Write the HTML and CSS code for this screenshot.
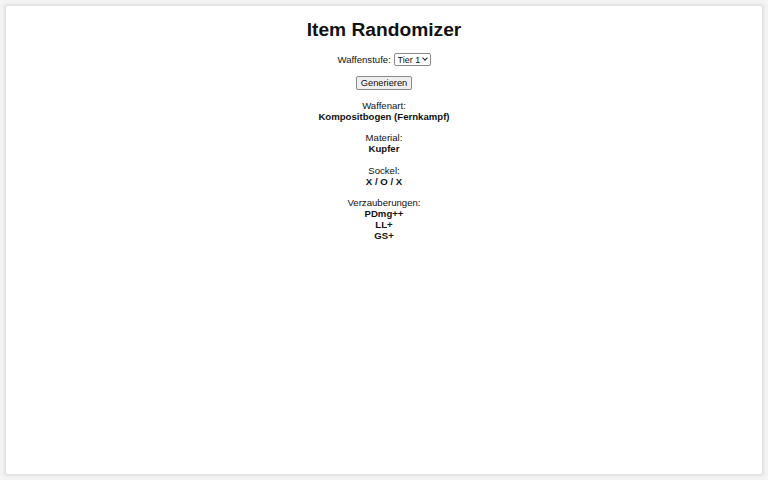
FILE: index.html
```html
<!DOCTYPE html>
<html lang="de">
<head>
<meta charset="utf-8">
<title>Item Randomizer</title>
<link rel="stylesheet" href="styles.css">
</head>
<body>
<div class="card">
	<h1>Item Randomizer</h1>
	<p class="row">
		<label for="tier">Waffenstufe:</label>
		<span class="pick">
			<select id="tier">
				<option>Tier 1</option>
				<option>Tier 2</option>
				<option>Tier 3</option>
			</select>
		</span>
	</p>
	<p class="row"><button id="roll">Generieren</button></p>
	<p class="field">Waffenart:<br><b>Kompositbogen (Fernkampf)</b></p>
	<p class="field">Material:<br><b>Kupfer</b></p>
	<p class="field">Sockel:<br><b>X / O / X</b></p>
	<p class="field">Verzauberungen:<br><b>PDmg++</b><br><b>LL+</b><br><b>GS+</b></p>
</div>
</body>
</html>
```

FILE: styles.css
```css
html,body{height:100%;}
body{margin:0;padding:5px;box-sizing:border-box;background:#f3f3f3;font-family:"Liberation Sans",Arial,sans-serif;font-size:9.6px;color:#111;}
.card{min-height:100%;box-sizing:border-box;background:#fff;border:1px solid #e2e2e2;box-shadow:0 0 3px rgba(0,0,0,0.12);text-align:center;padding:1px 0;}
h1{font-size:19.2px;margin:12px 0 12px;line-height:22px;}
p{margin:9.6px 0;line-height:11px;}
.row{margin:0 0 10px;}
.row + .row{margin-bottom:9.5px;}
label{vertical-align:middle;}
/* select with its own small chevron */
.pick{position:relative;display:inline-block;vertical-align:middle;}
.pick:after{content:"";position:absolute;right:4px;top:3px;width:3px;height:3px;border-right:1px solid #222;border-bottom:1px solid #222;transform:rotate(45deg);pointer-events:none;}
select{-webkit-appearance:none;appearance:none;display:block;font:9px "Liberation Sans",Arial,sans-serif;width:37px;height:13px;padding:0 0 0 3px;border:1px solid #8a8a8a;border-radius:2px;background:#fff;color:#111;}
button{font:9.3px "Liberation Sans",Arial,sans-serif;height:14px;padding:0 4px;border:1px solid #8a8a8a;border-radius:2px;background:#efefef;color:#111;}
.field{margin:0 0 10.6px;}
```
